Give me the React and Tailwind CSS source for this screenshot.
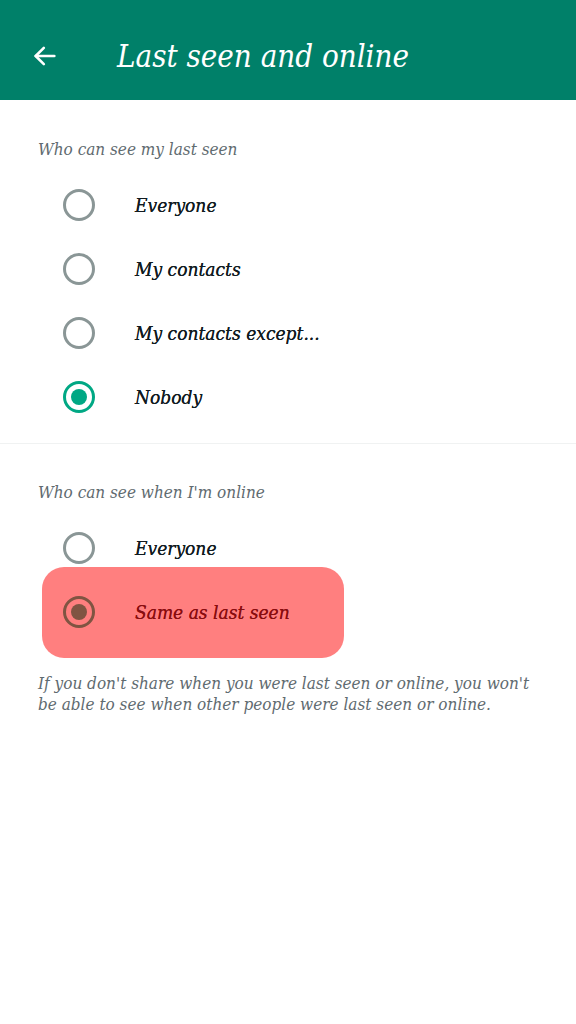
import React from 'react';

const serif = { fontFamily: '"DejaVu Serif Condensed", "DejaVu Serif", serif' };

function Radio({ checked }) {
  if (checked) {
    return (
      <span className="flex h-8 w-8 items-center justify-center rounded-full border-[3px] border-[#00a884]">
        <span className="h-4 w-4 rounded-full bg-[#00a884]" />
      </span>
    );
  }
  return <span className="block h-8 w-8 rounded-full border-[3px] border-[#8a9696]" />;
}

function Option({ label, checked }) {
  return (
    <div className="flex h-16 items-center pl-[63px]">
      <Radio checked={checked} />
      <span className="ml-[40px] text-[19px] italic text-[#111b21] [text-shadow:0_0_0.6px_currentColor]">{label}</span>
    </div>
  );
}

function SectionLabel({ children }) {
  return <p className="px-[38px] text-[17px] leading-[22px] italic text-[#5f6b70]">{children}</p>;
}

export default function App() {
  return (
    <div className="min-h-screen bg-white" style={serif}>
      <header className="flex h-[100px] items-center bg-[#008069] pt-[12px] text-white">
        <svg className="ml-[31px] h-7 w-7" viewBox="0 0 24 24" fill="none" stroke="currentColor" strokeWidth="2.2" strokeLinecap="round" strokeLinejoin="round">
          <path d="M20 12H4" />
          <path d="M11 5l-7 7 7 7" />
        </svg>
        <h1 className="ml-[58px] text-[31px] italic">Last seen and online</h1>
      </header>

      <section className="pt-[38px] pb-[14px]">
        <SectionLabel>Who can see my last seen</SectionLabel>
        <div className="mt-[13px]">
          <Option label="Everyone" />
          <Option label="My contacts" />
          <Option label="My contacts except..." />
          <Option label="Nobody" checked />
        </div>
      </section>

      <div className="h-px bg-[#f0f2f2]" />

      <section className="pt-[37px]">
        <SectionLabel>Who can see when I'm online</SectionLabel>
        <div className="mt-[13px]">
          <Option label="Everyone" />
          <div className="relative">
            <Option label="Same as last seen" checked />
            <div className="absolute top-[-13px] bottom-[-14px] left-[42px] w-[302px] rounded-[22px] bg-[#ff0000]/50" />
          </div>
        </div>
        <p className="mt-[29px] px-[38px] text-[17px] leading-[21px] italic text-[#5f6b70]">
          If you don't share when you were last seen or online, you won't be able to see when other people were last seen or online.
        </p>
      </section>
    </div>
  );
}
